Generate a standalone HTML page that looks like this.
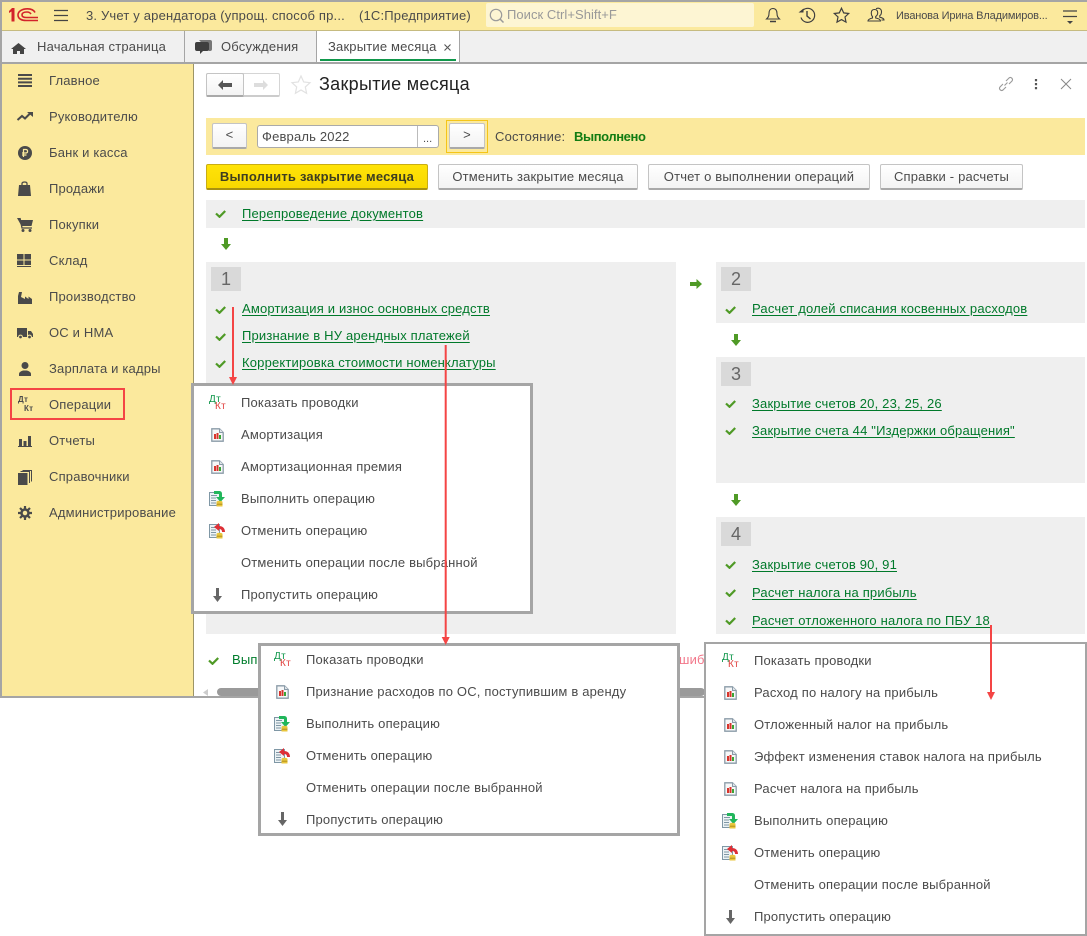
<!DOCTYPE html>
<html lang="ru"><head><meta charset="utf-8"><title>Закрытие месяца</title>
<style>
html,body{margin:0;padding:0;background:#fff}
body{position:relative;width:1087px;height:936px;overflow:hidden;font-family:"Liberation Sans",Arial,sans-serif;font-size:13px;color:#4b4b4b}
.b{position:absolute;box-sizing:border-box}
.t{position:absolute;white-space:nowrap;line-height:16px;font-size:13px;letter-spacing:.18px}
.l{color:#00792a;text-decoration:underline;text-underline-offset:2px}
.btn{position:absolute;box-sizing:border-box;height:26px;background:linear-gradient(#fff,#f3f3f3);border:1px solid #c4c4c4;border-bottom:2px solid #a9a9a9;border-radius:2px;text-align:center;line-height:23px;letter-spacing:.18px;white-space:nowrap}
.num{position:absolute;width:30px;height:24px;background:#d9d9d9;text-align:center;line-height:24px;font-size:18px;color:#666}
.menu{position:absolute;box-sizing:border-box;background:#fff;border:3px solid #a5a5a5}
svg{position:absolute;overflow:visible}
.dk{position:absolute;font-size:10px;line-height:10px;font-weight:normal;letter-spacing:.3px}
</style></head><body>
<svg width="0" height="0" style="position:absolute">
<defs>
<symbol id="ck" viewBox="0 0 11 8"><path d="M1 3.500l3.500 3.300L10.200 1" fill="none" stroke="#4f9a26" stroke-width="2.200"/></symbol>
<symbol id="dn" viewBox="0 0 10 12"><path d="M3 0h4v6h3L5 12 0 6h3z" fill="#4f9a26"/></symbol>
<symbol id="rp" viewBox="0 0 13 14"><path d="M.8.8h7.700l3.700 3.700v8.700H.8z" fill="#f6f7f8" stroke="#8a9ba8" stroke-width="1.300"/><path d="M8.500 .8v3.700h3.700" fill="#dfe5ea" stroke="#8a9ba8"/><rect x="3" y="6" width="2" height="5" fill="#d8342c"/><rect x="5.500" y="5" width="2" height="6" fill="#d8342c"/><rect x="8" y="7" width="2" height="4" fill="#3aa535"/></symbol>
<symbol id="ex" viewBox="0 0 16 16"><path d="M.5 1.500h10v13H.5z" fill="#edf3f5" stroke="#7f97a5"/><path d="M2 4.500h6M2 7h5M2 9.500h5M2 12h5" stroke="#7f97a5"/><path d="M5 0h5c2 0 3 1 3 3v3h3l-4.500 5L7 6h3V3H5z" fill="#21b65b"/><ellipse cx="10.500" cy="11" rx="3" ry="1.300" fill="#e9c63c"/><rect x="7.500" y="11" width="6" height="4.500" fill="#e9c63c"/><path d="M7.500 13.200h6" stroke="#b08f1c"/></symbol>
<symbol id="un" viewBox="0 0 16 16"><path d="M.5 1.500h10v13H.5z" fill="#edf3f5" stroke="#7f97a5"/><path d="M2 4.500h6M2 7h5M2 9.500h5M2 12h5" stroke="#7f97a5"/><path d="M10 0L5 4l5 4V6c2 0 3 1 3 3h3c0-4-2.500-6-6-6z" fill="#dd2f36"/><ellipse cx="10.500" cy="11" rx="3" ry="1.300" fill="#e9c63c"/><rect x="7.500" y="11" width="6" height="4.500" fill="#e9c63c"/><path d="M7.500 13.200h6" stroke="#b08f1c"/></symbol>
<symbol id="sk" viewBox="0 0 9 14"><path d="M3 0h3v8h3l-4.500 6L0 8h3z" fill="#666"/></symbol>
</defs></svg>

<!-- window -->
<div class="b" style="left:0;top:0;width:1087px;height:698px;border:2px solid #a5a5a5;border-right:0;background:#fff"></div>
<div class="b" style="left:2px;top:2px;width:1085px;height:29px;background:#fbe99d;border-bottom:1px solid #c6bb80"></div>
<div class="b" style="left:2px;top:31px;width:1085px;height:33px;background:#f0f0f0;border-bottom:2px solid #a5a5a5"></div>
<div class="b" style="left:184px;top:31px;width:1px;height:31px;background:#a5a5a5"></div>
<div class="b" style="left:316px;top:31px;width:1px;height:31px;background:#a5a5a5"></div>
<div class="b" style="left:459px;top:31px;width:1px;height:31px;background:#a5a5a5"></div>
<div class="b" style="left:317px;top:31px;width:142px;height:31px;background:#fff"></div>
<div class="b" style="left:320px;top:59px;width:136px;height:2px;background:#10984b"></div>
<div class="b" style="left:2px;top:64px;width:192px;height:632px;background:#fbe99d;border-right:1px solid #9d9566"></div>

<!-- header -->
<svg style="left:9px;top:8px" width="30" height="14" viewBox="0 0 30 14"><path d="M0 3l3-3h2.500v13.500h-3V3.500L0 5z" fill="#d3232a"/><path d="M26 4.500C24.500 1.500 21.500.8 18.500.8 13.500.8 9 3 9 7s4 5.500 8 5.500h12M22 6C21 4.500 20 4 18 4c-3 0-5 1-5 3s2 2.500 4.500 2.500H29" fill="none" stroke="#d3232a" stroke-width="1.600"/></svg>
<svg style="left:54px;top:9px" width="15" height="13"><path d="M0 1.500h14M0 6.500h14M0 11.500h14" stroke="#444" stroke-width="1.200"/></svg>
<span class="t" style="left:86px;top:8px">3. Учет у арендатора (упрощ. способ пр...</span>
<span class="t" style="left:359px;top:8px">(1С:Предприятие)</span>
<div class="b" style="left:486px;top:3px;width:268px;height:24px;background:#fdf5d3;border-radius:2px"></div>
<svg style="left:489px;top:8px" width="16" height="16"><circle cx="7" cy="7" r="5.700" fill="none" stroke="#9a9a9a" stroke-width="1.200"/><path d="M11 11l3.500 3.500" stroke="#9a9a9a" stroke-width="1.500"/></svg>
<span class="t" style="left:507px;top:7px;color:#999;letter-spacing:.05px">Поиск Ctrl+Shift+F</span>
<svg style="left:765px;top:7px" width="16" height="17"><path d="M8 1.500c-3 0-4 2.500-4 5 0 3-1 4-2.500 5.500h13C13 10.500 12 9.500 12 6.500c0-2.500-1-5-4-5z" fill="none" stroke="#3f3f3f" stroke-width="1.100"/><path d="M5 14.500h6" stroke="#3f3f3f" stroke-width="1.500"/></svg>
<svg style="left:798px;top:7px" width="18" height="17"><path d="M3.500 5a7 7 0 1 1-.5 5.500" fill="none" stroke="#3f3f3f" stroke-width="1.200"/><path d="M.5 5.500h5V1.500z" fill="#3f3f3f"/><path d="M9 4v5l3.500 3" fill="none" stroke="#3f3f3f" stroke-width="1.400"/></svg>
<svg style="left:833px;top:7px" width="17" height="17"><path d="M8.500 1.200l2.200 4.700 5 .6-3.700 3.500 1 5.100-4.500-2.500-4.500 2.500 1-5.100L1.300 6.500l5-.6z" fill="none" stroke="#3f3f3f" stroke-width="1.200"/></svg>
<svg style="left:867px;top:7px" width="18" height="16"><path d="M7.500 2.500c2 0 3.200 1.300 3.200 3.300S9.500 9 8.700 9.500V11c3 .6 4.800 1.300 4.800 3H1c0-1.700 2-2.400 4.500-3V9.500C4.700 9 4.300 7.800 4.300 5.800S5.500 2.500 7.500 2.500zM9 1.800c3-1.500 5.500.2 5.500 3 0 2-.8 3.300-1.700 3.800v1.600c2 .5 4.200 1.200 4.200 2.800h-2.500" fill="none" stroke="#3f3f3f" stroke-width="1.100"/></svg>
<span class="t" style="left:896px;top:8px;font-size:11px;letter-spacing:-.15px">Иванова Ирина Владимиров...</span>
<svg style="left:1063px;top:10px" width="15" height="15"><path d="M0 1h14M0 6.500h14" stroke="#444" stroke-width="1.200"/><path d="M4 11h6l-3 3z" fill="#444"/></svg>

<!-- tabs -->
<svg style="left:11px;top:43px" width="15" height="11"><path d="M7.500 0L0 6h2v5h4V8h3v3h4V6h2z" fill="#444"/></svg>
<span class="t" style="left:37px;top:39px">Начальная страница</span>
<svg style="left:195px;top:40px" width="17" height="15"><path d="M4 0h11q2 0 2 2v7q0 2-2 2h-1z" fill="#777"/><path d="M2 2h10q2 0 2 2v5q0 2-2 2H8l-3 3v-3H2q-2 0-2-2V4q0-2 2-2z" fill="#3f3f3f"/></svg>
<span class="t" style="left:221px;top:39px">Обсуждения</span>
<span class="t" style="left:328px;top:39px">Закрытие месяца</span>
<svg style="left:443px;top:43px" width="9" height="9"><path d="M1.500 1.500l6 6M7.500 1.500l-6 6" stroke="#555" stroke-width="1.100"/></svg>

<!-- sidebar -->
<svg style="left:18px;top:74px" width="14" height="13"><path d="M0 1h14M0 4.700h14M0 8.400h14M0 12h14" stroke="#4a4a4a" stroke-width="2"/></svg>
<span class="t" style="left:49px;top:73px">Главное</span>
<svg style="left:17px;top:112px" width="16" height="9"><path d="M.5 8l4.500-4 3 2.500L13 1.500" fill="none" stroke="#4a4a4a" stroke-width="2"/><path d="M10 0h6v5z" fill="#4a4a4a"/></svg>
<span class="t" style="left:49px;top:109px">Руководителю</span>
<svg style="left:18px;top:146px" width="14" height="14"><circle cx="7" cy="7" r="7" fill="#4a4a4a"/><path d="M5.500 11V3.500h2.300c2.400 0 2.400 3.500 0 3.500H4M4 9h4.500" fill="none" stroke="#fbe99d" stroke-width="1.200"/></svg>
<span class="t" style="left:49px;top:145px">Банк и касса</span>
<svg style="left:18px;top:181px" width="13" height="15"><path d="M1 4h11l1 11H0z" fill="#4a4a4a"/><path d="M4 6V2.500C4 .5 9 .5 9 2.500V6" fill="none" stroke="#4a4a4a" stroke-width="1.300"/></svg>
<span class="t" style="left:49px;top:181px">Продажи</span>
<svg style="left:17px;top:217px" width="16" height="15"><path d="M0 1h3l1 2h12l-1.500 6H4.500z" fill="#4a4a4a"/><path d="M3 1l2 10h10" fill="none" stroke="#4a4a4a" stroke-width="1.300"/><circle cx="6" cy="13.500" r="1.500" fill="#4a4a4a"/><circle cx="13" cy="13.500" r="1.500" fill="#4a4a4a"/></svg>
<span class="t" style="left:49px;top:217px">Покупки</span>
<svg style="left:17px;top:254px" width="14" height="13"><path d="M0 0h6.500v5.500H0zM7.500 0H14v5.500H7.500zM0 6.500h6.500V11H0zM7.500 6.500H14V11H7.500z" fill="#4a4a4a"/><path d="M0 12.500h14" stroke="#4a4a4a"/></svg>
<span class="t" style="left:49px;top:253px">Склад</span>
<svg style="left:18px;top:292px" width="14" height="12"><path d="M0 12V4l1-4h3L3 5l4 2V4.500L10.500 7V4.500L14 7v5z" fill="#4a4a4a"/></svg>
<span class="t" style="left:49px;top:289px">Производство</span>
<svg style="left:17px;top:328px" width="16" height="11"><path d="M0 0h10v9H0zM11 3h3l2 3v3h-5z" fill="#4a4a4a"/><circle cx="3.500" cy="9" r="1.900" fill="#4a4a4a" stroke="#fbe99d"/><circle cx="12.500" cy="9" r="1.900" fill="#4a4a4a" stroke="#fbe99d"/></svg>
<span class="t" style="left:49px;top:325px">ОС и НМА</span>
<svg style="left:19px;top:362px" width="12" height="14"><circle cx="6" cy="3.500" r="3.500" fill="#4a4a4a"/><path d="M0 14v-2c0-2 2.500-3 4-3.500h4C9.500 9 12 10 12 12v2z" fill="#4a4a4a"/></svg>
<span class="t" style="left:49px;top:361px">Зарплата и кадры</span>
<div class="b" style="left:10px;top:388px;width:115px;height:32px;border:2px solid #f44545"></div>
<span class="dk" style="left:18px;top:395px;font-size:8px;font-weight:bold;color:#4a4a4a">Дт</span>
<span class="dk" style="left:24px;top:404px;font-size:8px;font-weight:bold;color:#4a4a4a">Кт</span>
<span class="t" style="left:49px;top:397px">Операции</span>
<svg style="left:18px;top:436px" width="14" height="11"><path d="M1 3h3v7H1zM5.500 5h3v5h-3zM10 0h3v10h-3z" fill="#4a4a4a"/><path d="M0 10.500h14" stroke="#4a4a4a"/></svg>
<span class="t" style="left:49px;top:433px">Отчеты</span>
<svg style="left:18px;top:470px" width="14" height="15"><path d="M0 3h9.500v12H0z" fill="#4a4a4a"/><path d="M2.500 1.500h9V13M4.500.5h9v11" fill="none" stroke="#4a4a4a"/></svg>
<span class="t" style="left:49px;top:469px">Справочники</span>
<svg style="left:18px;top:506px" width="14" height="14"><circle cx="7" cy="7" r="3.500" fill="none" stroke="#4a4a4a" stroke-width="2.500"/><path d="M7 0v3M7 11v3M0 7h3M11 7h3M2 2l2 2M10 10l2 2M12 2l-2 2M4 10l-2 2" stroke="#4a4a4a" stroke-width="2.200"/></svg>
<span class="t" style="left:49px;top:505px">Администрирование</span>

<!-- form head -->
<div class="b" style="left:206px;top:73px;width:74px;height:24px;border:1px solid #d5d5d5;border-bottom:2px solid #ccc;border-radius:2px;background:#fff"></div>
<div class="b" style="left:206px;top:73px;width:38px;height:24px;border:1px solid #c4c4c4;border-bottom:2px solid #a9a9a9;border-radius:2px;background:linear-gradient(#fff,#f3f3f3)"></div>
<svg style="left:218px;top:80px" width="14" height="10"><path d="M5 0v3h9v4H5v3L0 5z" fill="#555"/></svg>
<svg style="left:254px;top:80px" width="14" height="10"><path d="M9 0v3H0v4h9v3l5-5z" fill="#ddd"/></svg>
<svg style="left:291px;top:75px" width="20" height="19"><path d="M10 1l2.700 6 6.300.7-4.700 4.300 1.300 6.300L10 15l-5.600 3.300L5.700 12 1 7.700 7.300 7z" fill="none" stroke="#e2e2e2" stroke-width="1.200"/></svg>
<span class="t" style="left:319px;top:72px;font-size:18px;line-height:24px;color:#222;letter-spacing:.3px">Закрытие месяца</span>
<svg style="left:998px;top:76px" width="16" height="16"><path d="M6.500 9.500l3-3M5 8l-3 3c-1.500 2 1 4.500 3 3l3-3M11 8l3-3c1.500-2-1-4.500-3-3L8 5" fill="none" stroke="#9a9a9a" stroke-width="1.100"/></svg>
<svg style="left:1013px;top:78px" width="46" height="12"><path d="M23 1v2.300M23 5v2.300M23 9v2.300" stroke="#555" stroke-width="2.200"/></svg>
<svg style="left:1060px;top:78px" width="12" height="12"><path d="M1 1l10 10M11 1L1 11" stroke="#888" stroke-width="1"/></svg>

<div class="b" style="left:206px;top:118px;width:879px;height:37px;background:#fbe99d"></div>
<div class="btn" style="left:212px;top:123px;width:35px;line-height:21px">&lt;</div>
<div class="b" style="left:257px;top:125px;width:182px;height:23px;background:#fff;border:1px solid #aaa;border-radius:3px"></div>
<div class="b" style="left:417px;top:126px;width:1px;height:21px;background:#bbb"></div>
<span class="t" style="left:262px;top:129px">Февраль 2022</span>
<span class="t" style="left:423px;top:131px;font-size:11px;letter-spacing:0">...</span>
<div class="b" style="left:446px;top:120px;width:42px;height:33px;border:1px solid #f5c518"></div>
<div class="btn" style="left:449px;top:123px;width:36px;line-height:21px">&gt;</div>
<span class="t" style="left:495px;top:129px">Состояние:</span>
<span class="t" style="left:574px;top:129px;color:#127c12;font-weight:bold;letter-spacing:-.4px">Выполнено</span>

<div class="btn" style="left:206px;top:164px;width:222px;background:linear-gradient(#ffe308,#f8d800);border-color:#c9ad14;border-bottom-color:#a89110;font-weight:bold;color:#3e3e20;letter-spacing:.2px">Выполнить закрытие месяца</div>
<div class="btn" style="left:438px;top:164px;width:200px">Отменить закрытие месяца</div>
<div class="btn" style="left:648px;top:164px;width:222px">Отчет о выполнении операций</div>
<div class="btn" style="left:880px;top:164px;width:143px">Справки - расчеты</div>

<!-- panels -->
<div class="b" style="left:206px;top:200px;width:879px;height:28px;background:#efefef"></div>
<div class="b" style="left:206px;top:262px;width:470px;height:372px;background:#efefef"></div>
<div class="b" style="left:716px;top:262px;width:369px;height:61px;background:#efefef"></div>
<div class="b" style="left:716px;top:357px;width:369px;height:126px;background:#efefef"></div>
<div class="b" style="left:716px;top:517px;width:369px;height:117px;background:#efefef"></div>
<div class="num" style="left:211px;top:267px">1</div>
<div class="num" style="left:721px;top:267px">2</div>
<div class="num" style="left:721px;top:362px">3</div>
<div class="num" style="left:721px;top:522px">4</div>

<svg style="left:215px;top:210px" width="11" height="8"><use href="#ck"/></svg>
<span class="t l" style="left:242px;top:206px">Перепроведение документов</span>
<svg style="left:221px;top:238px" width="10" height="12"><use href="#dn"/></svg>
<svg style="left:690px;top:279px" width="12" height="10"><path d="M0 3h6.500V0L12 5 6.500 10V7H0z" fill="#4f9a26"/></svg>
<svg style="left:731px;top:334px" width="10" height="12"><use href="#dn"/></svg>
<svg style="left:731px;top:494px" width="10" height="12"><use href="#dn"/></svg>

<svg style="left:215px;top:306px" width="11" height="8"><use href="#ck"/></svg>
<span class="t l" style="left:242px;top:301px">Амортизация и износ основных средств</span>
<svg style="left:215px;top:333px" width="11" height="8"><use href="#ck"/></svg>
<span class="t l" style="left:242px;top:328px">Признание в НУ арендных платежей</span>
<svg style="left:215px;top:360px" width="11" height="8"><use href="#ck"/></svg>
<span class="t l" style="left:242px;top:355px">Корректировка стоимости номенклатуры</span>

<svg style="left:725px;top:306px" width="11" height="8"><use href="#ck"/></svg>
<span class="t l" style="left:752px;top:301px">Расчет долей списания косвенных расходов</span>
<svg style="left:725px;top:400px" width="11" height="8"><use href="#ck"/></svg>
<span class="t l" style="left:752px;top:396px">Закрытие счетов 20, 23, 25, 26</span>
<svg style="left:725px;top:427px" width="11" height="8"><use href="#ck"/></svg>
<span class="t l" style="left:752px;top:423px">Закрытие счета 44 "Издержки обращения"</span>
<svg style="left:725px;top:561px" width="11" height="8"><use href="#ck"/></svg>
<span class="t l" style="left:752px;top:557px">Закрытие счетов 90, 91</span>
<svg style="left:725px;top:589px" width="11" height="8"><use href="#ck"/></svg>
<span class="t l" style="left:752px;top:585px">Расчет налога на прибыль</span>
<svg style="left:725px;top:617px" width="11" height="8"><use href="#ck"/></svg>
<span class="t l" style="left:752px;top:613px">Расчет отложенного налога по ПБУ 18</span>

<!-- bottom row -->
<svg style="left:208px;top:657px" width="11" height="8"><use href="#ck"/></svg>
<span class="t" style="left:232px;top:652px;color:#007d2c">Вып</span>
<span class="t" style="left:679px;top:652px;color:#f2778a">шибк</span>
<svg style="left:203px;top:689px" width="5" height="7"><path d="M5 0v7L0 3.500z" fill="#ccc"/></svg>
<div class="b" style="left:217px;top:688px;width:488px;height:8px;background:#9a9a9a;border-radius:4px"></div>
<div class="b" style="left:0;top:696px;width:1087px;height:2px;background:#a5a5a5"></div>

<!-- menu 1 -->
<div class="menu" style="left:191px;top:383px;width:342px;height:231px"></div>
<span class="dk" style="left:209px;top:395px;color:#0d9548">Дт</span><span class="dk" style="left:215px;top:402px;color:#e0413f">Кт</span>
<span class="t" style="left:241px;top:395px">Показать проводки</span>
<svg style="left:211px;top:428px" width="13" height="14"><use href="#rp"/></svg><span class="t" style="left:241px;top:427px">Амортизация</span>
<svg style="left:211px;top:460px" width="13" height="14"><use href="#rp"/></svg><span class="t" style="left:241px;top:459px">Амортизационная премия</span>
<svg style="left:209px;top:491px" width="16" height="16"><use href="#ex"/></svg><span class="t" style="left:241px;top:491px">Выполнить операцию</span>
<svg style="left:209px;top:523px" width="16" height="16"><use href="#un"/></svg><span class="t" style="left:241px;top:523px">Отменить операцию</span>
<span class="t" style="left:241px;top:555px">Отменить операции после выбранной</span>
<svg style="left:213px;top:588px" width="9" height="14"><use href="#sk"/></svg><span class="t" style="left:241px;top:587px">Пропустить операцию</span>

<!-- menu 2 -->
<div class="menu" style="left:258px;top:643px;width:422px;height:193px"></div>
<span class="dk" style="left:274px;top:652px;color:#0d9548">Дт</span><span class="dk" style="left:280px;top:659px;color:#e0413f">Кт</span>
<span class="t" style="left:306px;top:652px">Показать проводки</span>
<svg style="left:276px;top:685px" width="13" height="14"><use href="#rp"/></svg><span class="t" style="left:306px;top:684px">Признание расходов по ОС, поступившим в аренду</span>
<svg style="left:274px;top:716px" width="16" height="16"><use href="#ex"/></svg><span class="t" style="left:306px;top:716px">Выполнить операцию</span>
<svg style="left:274px;top:748px" width="16" height="16"><use href="#un"/></svg><span class="t" style="left:306px;top:748px">Отменить операцию</span>
<span class="t" style="left:306px;top:780px">Отменить операции после выбранной</span>
<svg style="left:278px;top:812px" width="9" height="14"><use href="#sk"/></svg><span class="t" style="left:306px;top:812px">Пропустить операцию</span>

<!-- menu 3 -->
<div class="menu" style="left:704px;top:642px;width:383px;height:294px;border-width:2px"></div>
<span class="dk" style="left:722px;top:653px;color:#0d9548">Дт</span><span class="dk" style="left:728px;top:660px;color:#e0413f">Кт</span>
<span class="t" style="left:754px;top:653px">Показать проводки</span>
<svg style="left:724px;top:686px" width="13" height="14"><use href="#rp"/></svg><span class="t" style="left:754px;top:685px">Расход по налогу на прибыль</span>
<svg style="left:724px;top:718px" width="13" height="14"><use href="#rp"/></svg><span class="t" style="left:754px;top:717px">Отложенный налог на прибыль</span>
<svg style="left:724px;top:750px" width="13" height="14"><use href="#rp"/></svg><span class="t" style="left:754px;top:749px">Эффект изменения ставок налога на прибыль</span>
<svg style="left:724px;top:782px" width="13" height="14"><use href="#rp"/></svg><span class="t" style="left:754px;top:781px">Расчет налога на прибыль</span>
<svg style="left:722px;top:813px" width="16" height="16"><use href="#ex"/></svg><span class="t" style="left:754px;top:813px">Выполнить операцию</span>
<svg style="left:722px;top:845px" width="16" height="16"><use href="#un"/></svg><span class="t" style="left:754px;top:845px">Отменить операцию</span>
<span class="t" style="left:754px;top:877px">Отменить операции после выбранной</span>
<svg style="left:726px;top:910px" width="9" height="14"><use href="#sk"/></svg><span class="t" style="left:754px;top:909px">Пропустить операцию</span>

<!-- red arrows -->
<svg style="left:0;top:0" width="1087" height="936">
<path d="M233 307V378M445.700 345V638M991 625V693" stroke="#f44545" stroke-width="2" fill="none"/>
<path d="M229 377h8L233 385zM441.700 637h8L445.700 645zM987 692h8L991 700z" fill="#f44545"/>
</svg>
</body></html>
